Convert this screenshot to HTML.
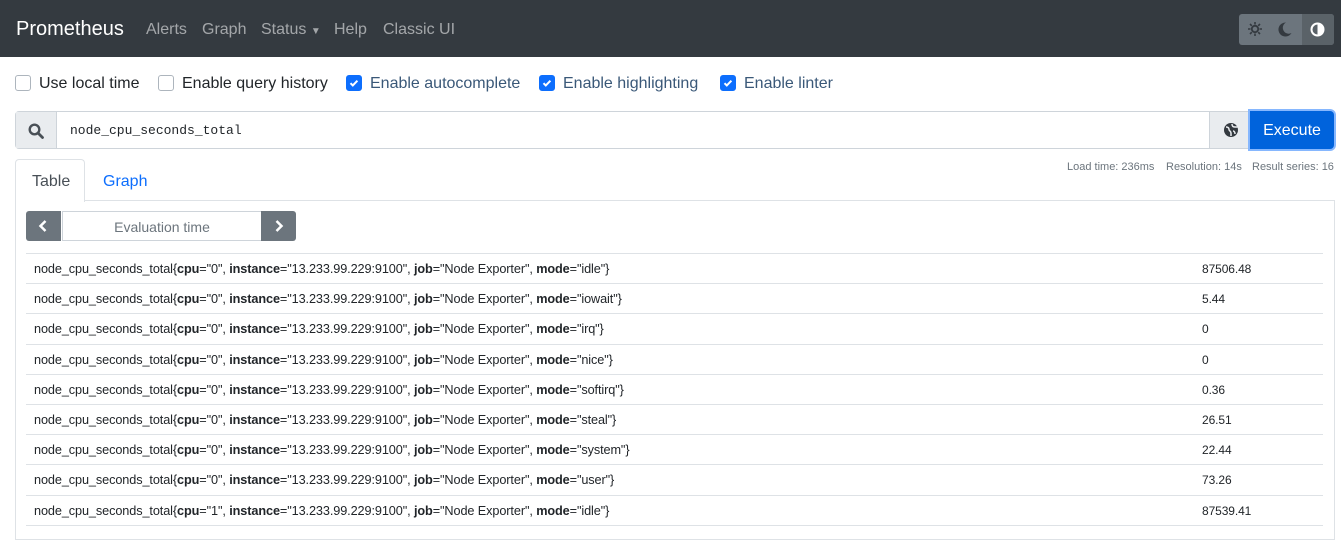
<!DOCTYPE html>
<html><head><style>
*{box-sizing:border-box;margin:0;padding:0}
body{width:1341px;height:528px;overflow:hidden;font-family:"Liberation Sans",sans-serif;color:#212529;background:#fff;position:relative}
.nav{position:absolute;left:0;top:0;width:1341px;height:57px;background:#343a40}
.brand{position:absolute;left:16px;top:18px;color:#fff;font-size:20px}
.nl{position:absolute;top:21px;color:rgba(255,255,255,.55);font-size:16px}
.theme{position:absolute;left:1239px;top:14px;width:95px;height:31px;background:#6c757d;border-radius:3px;overflow:hidden}
.theme .act{position:absolute;right:0;top:0;width:32px;height:31px;background:#5a6268}
.cb{position:absolute;top:75px;width:16px;height:16px;border:1px solid #adb5bd;border-radius:3px;background:#fff}
.cb.on{background:#0d6efd;border-color:#0d6efd}
.cl{position:absolute;top:75px;font-size:16px;color:#212529}
.ig{position:absolute;left:15px;top:111px;width:1235px;height:38px;border:1px solid #ced4da;border-radius:4px 0 0 4px}
.addon{position:absolute;top:0;height:36px;background:#e9ecef}
.exec{position:absolute;left:1250px;top:111px;width:84px;height:38px;background:#0063dc;color:#fff;font-size:16px;text-align:center;line-height:40px;border-radius:0 4px 4px 0;box-shadow:0 0 0 2px #86b7fe}
.meta{position:absolute;top:161px;font-size:11px;color:#6c757d}
.tab{position:absolute;left:15px;top:159px;width:70px;height:43px;border:1px solid #dee2e6;border-bottom:none;border-radius:4px 4px 0 0;background:#fff;font-size:16px;padding:13px 0 0 16px;color:#495057;z-index:2}
.panel{position:absolute;left:15px;top:200px;width:1320px;height:340px;border:1px solid #dee2e6}
.btn{position:absolute;top:211px;width:35px;height:30px;background:#6c757d;color:#fff}
.et{position:absolute;left:62px;top:211px;width:200px;height:30px;border:1px solid #ced4da;font-size:14px;color:#6c757d;text-align:center;line-height:31px}
.row{position:absolute;left:26px;width:1297px;height:30px;border-top:1px solid #dee2e6;font-size:12.7px;line-height:31px;padding-left:8px;letter-spacing:-0.1px}
.row span{position:absolute;left:1176px;font-size:12px}
</style></head><body>
<div class="nav">
<div class="brand">Prometheus</div>
<div class="nl" style="left:146px">Alerts</div>
<div class="nl" style="left:202px">Graph</div>
<div class="nl" style="left:261px">Status <span style="font-size:10px">▼</span></div>
<div class="nl" style="left:334px">Help</div>
<div class="nl" style="left:383px">Classic UI</div>
<div class="theme"><div class="act"></div>
<svg style="position:absolute;left:9px;top:8px" width="14" height="14" viewBox="0 0 14 14"><circle cx="7" cy="7" r="3.2" fill="none" stroke="#343a40" stroke-width="1.8"/><g stroke="#343a40" stroke-width="1.6"><path d="M7 0v2.5M7 11.5V14M0 7h2.5M11.5 7H14M2 2l1.8 1.8M10.2 10.2 12 12M2 12l1.8-1.8M10.2 3.8 12 2"/></g></svg>
<svg style="position:absolute;left:39px;top:8px" width="14" height="15" viewBox="0 0 14 15"><path d="M8 0.5A7 7 0 1 0 13.5 11 5.5 5.5 0 0 1 8 0.5z" fill="#343a40"/></svg>
<svg style="position:absolute;left:71px;top:8px" width="15" height="15" viewBox="0 0 15 15"><circle cx="7.5" cy="7.5" r="6" fill="none" stroke="#fff" stroke-width="2"/><path d="M7.5 1.5a6 6 0 0 1 0 12z" fill="#fff"/></svg>
</div>
</div>
<div class="cb" style="left:15px"></div><div class="cl" style="left:39px">Use local time</div>
<div class="cb" style="left:158px"></div><div class="cl" style="left:182px">Enable query history</div>
<div class="cb on" style="left:346px"><svg width="14" height="14" viewBox="0 0 14 14"><path d="M3.5 7.2l2.3 2.3 4.6-4.8" fill="none" stroke="#fff" stroke-width="2"/></svg></div><div class="cl" style="left:370px;color:#3a5878">Enable autocomplete</div>
<div class="cb on" style="left:539px"><svg width="14" height="14" viewBox="0 0 14 14"><path d="M3.5 7.2l2.3 2.3 4.6-4.8" fill="none" stroke="#fff" stroke-width="2"/></svg></div><div class="cl" style="left:563px;color:#3a5878">Enable highlighting</div>
<div class="cb on" style="left:720px"><svg width="14" height="14" viewBox="0 0 14 14"><path d="M3.5 7.2l2.3 2.3 4.6-4.8" fill="none" stroke="#fff" stroke-width="2"/></svg></div><div class="cl" style="left:744px;color:#3a5878">Enable linter</div>
<div class="ig">
<div class="addon" style="left:0;width:41px;border-right:1px solid #ced4da"><svg style="position:absolute;left:12px;top:11px" width="16" height="16" viewBox="0 0 16 16"><circle cx="6.5" cy="6.5" r="4.8" fill="none" stroke="#495057" stroke-width="2.4"/><path d="M10 10l4.5 4.5" stroke="#495057" stroke-width="2.8" stroke-linecap="round"/></svg></div>
<div style="position:absolute;left:54px;top:11px;font-family:'Liberation Mono',monospace;font-size:13px">node_cpu_seconds_total</div>
<div class="addon" style="left:1193px;width:41px;border-left:1px solid #ced4da"><svg style="position:absolute;left:13px;top:10px" width="16" height="16" viewBox="0 0 16 16"><circle cx="8" cy="8" r="7" fill="#343a40"/><path d="M3 5c2 0 3 1 3 2.5S8 9 8 11v3M9 2c0 2 1 3 3 3h2.5M10 9c1 0 2 1 2 3" stroke="#e9ecef" stroke-width="1.5" fill="none"/></svg></div>
</div>
<div class="exec">Execute</div>
<div class="meta" style="left:1067px">Load time: 236ms</div>
<div class="meta" style="left:1166px">Resolution: 14s</div>
<div class="meta" style="left:1252px">Result series: 16</div>
<div class="tab">Table</div>
<div style="position:absolute;left:103px;top:173px;font-size:16px;color:#0d6efd">Graph</div>
<div class="panel"></div>
<div class="btn" style="left:26px;border-radius:3px 0 0 3px"><svg style="position:absolute;left:12px;top:8px" width="10" height="14" viewBox="0 0 10 14"><path d="M7.5 2 2.5 7l5 5" fill="none" stroke="#fff" stroke-width="2.5"/></svg></div>
<div class="et">Evaluation time</div>
<div class="btn" style="left:261px;border-radius:0 3px 3px 0"><svg style="position:absolute;left:13px;top:8px" width="10" height="14" viewBox="0 0 10 14"><path d="M2.5 2l5 5-5 5" fill="none" stroke="#fff" stroke-width="2.5"/></svg></div>

<div class="row" style="top:253px">node_cpu_seconds_total{<b>cpu</b>="0", <b>instance</b>="13.233.99.229:9100", <b>job</b>="Node Exporter", <b>mode</b>="idle"}<span>87506.48</span></div>
<div class="row" style="top:283px">node_cpu_seconds_total{<b>cpu</b>="0", <b>instance</b>="13.233.99.229:9100", <b>job</b>="Node Exporter", <b>mode</b>="iowait"}<span>5.44</span></div>
<div class="row" style="top:313px">node_cpu_seconds_total{<b>cpu</b>="0", <b>instance</b>="13.233.99.229:9100", <b>job</b>="Node Exporter", <b>mode</b>="irq"}<span>0</span></div>
<div class="row" style="top:344px">node_cpu_seconds_total{<b>cpu</b>="0", <b>instance</b>="13.233.99.229:9100", <b>job</b>="Node Exporter", <b>mode</b>="nice"}<span>0</span></div>
<div class="row" style="top:374px">node_cpu_seconds_total{<b>cpu</b>="0", <b>instance</b>="13.233.99.229:9100", <b>job</b>="Node Exporter", <b>mode</b>="softirq"}<span>0.36</span></div>
<div class="row" style="top:404px">node_cpu_seconds_total{<b>cpu</b>="0", <b>instance</b>="13.233.99.229:9100", <b>job</b>="Node Exporter", <b>mode</b>="steal"}<span>26.51</span></div>
<div class="row" style="top:434px">node_cpu_seconds_total{<b>cpu</b>="0", <b>instance</b>="13.233.99.229:9100", <b>job</b>="Node Exporter", <b>mode</b>="system"}<span>22.44</span></div>
<div class="row" style="top:464px">node_cpu_seconds_total{<b>cpu</b>="0", <b>instance</b>="13.233.99.229:9100", <b>job</b>="Node Exporter", <b>mode</b>="user"}<span>73.26</span></div>
<div class="row" style="top:495px">node_cpu_seconds_total{<b>cpu</b>="1", <b>instance</b>="13.233.99.229:9100", <b>job</b>="Node Exporter", <b>mode</b>="idle"}<span>87539.41</span></div>
<div class="row" style="top:525px"></div>
</body></html>
